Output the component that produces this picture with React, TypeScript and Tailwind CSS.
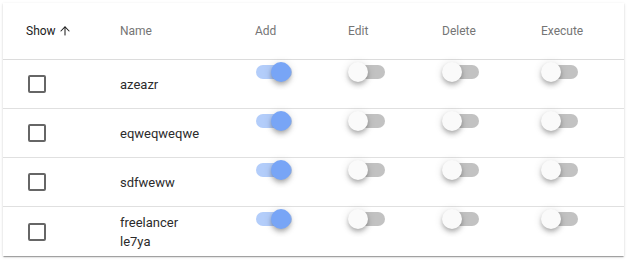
import { ArrowUp } from "lucide-react"

type Row = {
    name: string[]
    add: boolean
    edit: boolean
    del: boolean
    exec: boolean
}

const rows: Row[] = [
    { name: ["azeazr"], add: true, edit: false, del: false, exec: false },
    { name: ["eqweqweqwe"], add: true, edit: false, del: false, exec: false },
    { name: ["sdfweww"], add: true, edit: false, del: false, exec: false },
    { name: ["freelancer", "le7ya"], add: true, edit: false, del: false, exec: false },
]

const cols = "grid grid-cols-[94px_135px_93px_94px_99px_1fr] pl-[23px]"

function Toggle({ on }: { on: boolean }) {
    return (
        <div className="relative mt-[2px] h-5 w-[37px]">
            <div
                className={`absolute left-[1px] top-[3px] h-[14px] w-[36px] rounded-full ${on ? "bg-[#b3cdfa]" : "bg-[#c2c2c2]"}`}
            />
            <div
                className={`absolute top-0 h-5 w-5 rounded-full shadow-[0_2px_4px_-1px_rgba(0,0,0,0.2),0_4px_5px_0_rgba(0,0,0,0.14),0_1px_10px_0_rgba(0,0,0,0.12)] ${on ? "left-[16px] bg-[#78a5f6]" : "left-0 bg-[#fafafa]"}`}
            />
        </div>
    )
}

export default function App() {
    return (
        <div className="bg-white w-[627px] h-[260px] pt-[3px] pl-[3px] font-['Roboto',sans-serif]">
            <div className="w-[621px] bg-white shadow-[0_2px_1px_-1px_rgba(0,0,0,0.2),0_1px_1px_0_rgba(0,0,0,0.14),0_1px_3px_0_rgba(0,0,0,0.12)]">
                <div className={`${cols} h-[57px] items-center border-b border-[#dcdcdc] text-[12px] text-[#757575]`}>
                    <div className="flex items-center gap-[2px] text-[#212121]">
                        Show
                        <ArrowUp size={14} strokeWidth={1.8} className="text-[#222]" />
                    </div>
                    <div>Name</div>
                    <div>Add</div>
                    <div>Edit</div>
                    <div>Delete</div>
                    <div>Execute</div>
                </div>
                {rows.map((r, i) => (
                    <div
                        key={i}
                        className={`${cols} h-[49px] ${i < rows.length - 1 ? "border-b border-[#e0e0e0]" : ""} text-[13px] text-[#2b2b2b]`}
                    >
                        <div className="flex items-center pl-[2px]">
                            <div className="h-[18px] w-[18px] rounded-[2px] border-2 border-[#666]" />
                        </div>
                        <div className="flex flex-col justify-center leading-[19px]">
                            {r.name.map((n) => (
                                <div key={n}>{n}</div>
                            ))}
                        </div>
                        <div>
                            <Toggle on={r.add} />
                        </div>
                        <div>
                            <Toggle on={r.edit} />
                        </div>
                        <div>
                            <Toggle on={r.del} />
                        </div>
                        <div>
                            <Toggle on={r.exec} />
                        </div>
                    </div>
                ))}
            </div>
        </div>
    )
}
